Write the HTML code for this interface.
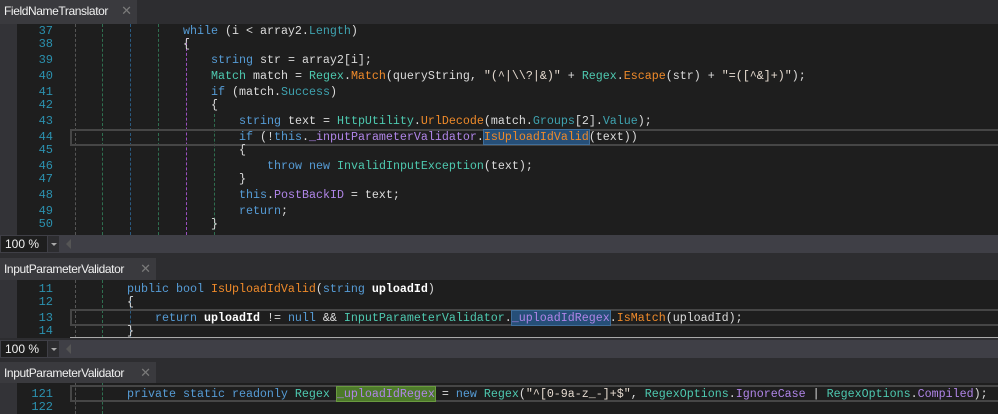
<!DOCTYPE html>
<html><head><meta charset="utf-8"><style>
*{margin:0;padding:0;box-sizing:border-box}
body{width:998px;height:414px;background:#2d2d30;position:relative;overflow:hidden;font-family:"Liberation Sans",sans-serif}
.abs{position:absolute}
.tabbar{position:absolute;left:0;width:998px;background:#2d2d30}
.tab{position:absolute;left:0;top:0;height:100%;background:#3a3a3e;color:#f1f1f1;font-size:12px;letter-spacing:-0.4px;padding-left:4px;line-height:22px;white-space:nowrap}
.tab .x{position:absolute;right:5px;top:0;color:#7a7a7a;font-size:13px;letter-spacing:0}
.code{position:absolute;left:0;width:998px;background:#1e1e1e;overflow:hidden}
.gut{position:absolute;left:0;top:0;bottom:0;width:17px;background:#333337}
.ln{position:absolute;left:17px;width:36px;text-align:right;color:#2b91af;font:12px "Liberation Mono",monospace;line-height:14px}
.l{position:absolute;white-space:pre;color:#dcdcdc;font:11.67px "Liberation Mono",monospace;line-height:14px;height:14px}
.g{position:absolute;top:0;bottom:0;width:0;border-left:1px dashed}
.cur{position:absolute;left:70px;right:-2px;border:2px solid #464646;height:17px}
.status{position:absolute;left:0;width:998px;height:18px;background:#3f3f46}
.zoom{position:absolute;left:1px;top:1px;width:46px;height:16px;background:#1e1e1e;color:#f1f1f1;font-size:12px;line-height:16px;padding-left:4px}
.dd{position:absolute;left:48px;top:1px;width:11px;height:16px;background:#2d2d30}
.dd:after{content:"";position:absolute;left:3px;top:7px;border:3px solid transparent;border-top:3px solid #aaa}
.sl{position:absolute;left:66px;top:4px;border:5px solid transparent;border-right:5px solid #555;border-left:0}
.k{color:#569cd6}.t{color:#4ec9b0}.m{color:#ef8a2a}.p{color:#3fa3b0}.f{color:#b085e8}.s{color:#e6dbd0}.b{color:#fff;font-weight:bold}
.hl{background:#264f78;outline:1px solid #3f6d99}
.hg{background:#4d7a2a;outline:1px solid #6a9a40}
</style></head><body>

<div class="tabbar" style="top:0;height:24px"><div class="tab" style="width:137px">FieldNameTranslator<span class="x">✕</span></div></div>
<div class="code" style="top:24px;height:211px">
<div class="gut"></div>
<div class="g" style="left:75px;border-color:#555"></div>
<div class="g" style="left:102px;border-color:#2f6f50"></div>
<div class="g" style="left:130px;border-color:#2b5a80"></div>
<div class="g" style="left:158px;border-color:#2f6f50"></div>
<div class="g" style="left:186px;top:14px;border-color:#9a4ec0"></div>
<div class="g" style="left:214px;top:90px;border-color:#2f6f50"></div>
<div class="cur" style="top:105px"></div>
<div class="ln" style="top:0">37</div><div class="l" style="top:0;left:183px"><span class="k">while</span> (i &lt; array2.<span class="p">Length</span>)</div>
<div class="ln" style="top:13px">38</div><div class="l" style="top:13px;left:183px">{</div>
<div class="ln" style="top:29px">39</div><div class="l" style="top:29px;left:211px"><span class="k">string</span> str = array2[i];</div>
<div class="ln" style="top:45px">40</div><div class="l" style="top:45px;left:211px"><span class="t">Match</span> match = <span class="t">Regex</span>.<span class="m">Match</span>(queryString, <span class="s">"(^|\\?|&amp;)"</span> + <span class="t">Regex</span>.<span class="m">Escape</span>(str) + <span class="s">"=([^&amp;]+)"</span>);</div>
<div class="ln" style="top:61px">41</div><div class="l" style="top:61px;left:211px"><span class="k">if</span> (match.<span class="p">Success</span>)</div>
<div class="ln" style="top:74px">42</div><div class="l" style="top:74px;left:211px">{</div>
<div class="ln" style="top:90px">43</div><div class="l" style="top:90px;left:239px"><span class="k">string</span> text = <span class="t">HttpUtility</span>.<span class="m">UrlDecode</span>(match.<span class="p">Groups</span>[2].<span class="p">Value</span>);</div>
<div class="ln" style="top:106px">44</div><div class="l" style="top:106px;left:239px"><span class="k">if</span> (!<span class="k">this</span>.<span class="f">_inputParameterValidator</span>.<span class="m hl">IsUploadIdValid</span>(text))</div>
<div class="ln" style="top:119px">45</div><div class="l" style="top:119px;left:239px">{</div>
<div class="ln" style="top:135px">46</div><div class="l" style="top:135px;left:267px"><span class="k">throw</span> <span class="k">new</span> <span class="t">InvalidInputException</span>(text);</div>
<div class="ln" style="top:148px">47</div><div class="l" style="top:148px;left:239px">}</div>
<div class="ln" style="top:164px">48</div><div class="l" style="top:164px;left:239px"><span class="k">this</span>.<span class="f">PostBackID</span> = text;</div>
<div class="ln" style="top:180px">49</div><div class="l" style="top:180px;left:239px"><span class="k">return</span>;</div>
<div class="ln" style="top:193px">50</div><div class="l" style="top:193px;left:211px">}</div>
</div>
<div class="status" style="top:235px"><div class="zoom">100 %</div><div class="dd"></div><div class="sl"></div></div>

<div class="tabbar" style="top:258px;height:22px"><div class="tab" style="width:156px">InputParameterValidator<span class="x">✕</span></div></div>
<div class="code" style="top:280px;height:58px">
<div class="gut"></div>
<div class="g" style="left:75px;border-color:#555"></div>
<div class="g" style="left:102px;border-color:#2f6f50"></div>
<div class="g" style="left:130px;top:16px;border-color:#2b5a80"></div>
<div class="cur" style="top:29px"></div>
<div class="ln" style="top:2px">11</div><div class="l" style="top:2px;left:127px"><span class="k">public</span> <span class="k">bool</span> <span class="m">IsUploadIdValid</span>(<span class="k">string</span> <span class="b">uploadId</span>)</div>
<div class="ln" style="top:15px">12</div><div class="l" style="top:15px;left:127px">{</div>
<div class="ln" style="top:31px">13</div><div class="l" style="top:31px;left:155px"><span class="k">return</span> <span class="b">uploadId</span> != <span class="k">null</span> &amp;&amp; <span class="t">InputParameterValidator</span>.<span class="f hl">_uploadIdRegex</span>.<span class="m">IsMatch</span>(uploadId);</div>
<div class="ln" style="top:44px">14</div><div class="l" style="top:44px;left:127px">}</div>
<div class="abs" style="left:70px;right:0;top:57px;height:1px;background:#aaa"></div>
</div>
<div class="status" style="top:340px"><div class="zoom">100 %</div><div class="dd"></div><div class="sl"></div></div>

<div class="tabbar" style="top:362px;height:21px"><div class="tab" style="width:156px">InputParameterValidator<span class="x">✕</span></div></div>
<div class="code" style="top:383px;height:31px">
<div class="gut"></div>
<div class="g" style="left:75px;border-color:#555"></div>
<div class="g" style="left:102px;border-color:#2f6f50"></div>
<div class="cur" style="top:2px"></div>
<div class="ln" style="top:4px">121</div><div class="l" style="top:4px;left:127px"><span class="k">private</span> <span class="k">static</span> <span class="k">readonly</span> <span class="t">Regex</span> <span class="f hg">_uploadIdRegex</span> = <span class="k">new</span> <span class="t">Regex</span>(<span class="s">"^[0-9a-z_-]+$"</span>, <span class="t">RegexOptions</span>.<span class="f">IgnoreCase</span> | <span class="t">RegexOptions</span>.<span class="f">Compiled</span>);</div>
<div class="ln" style="top:17px">122</div>
</div>
</body></html>
